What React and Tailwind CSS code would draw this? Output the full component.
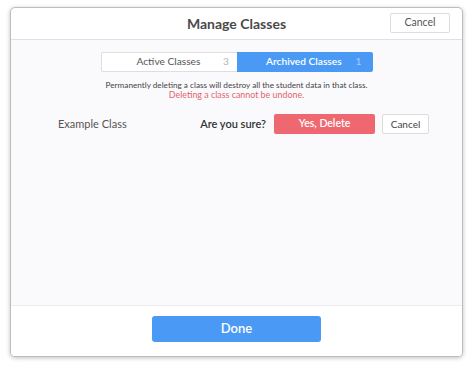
export default function App() {
  const font = { fontFamily: "Lato, 'Open Sans', sans-serif" };
  return (
    <div className="w-[474px] h-[370px] bg-white pt-[7px] px-[10px]" style={font}>
      <div className="w-[453px] h-[350px] rounded-[5px] border border-[#bdbdbd] shadow-[0_1px_4px_rgba(0,0,0,0.25)] bg-white flex flex-col overflow-hidden">
        <div className="h-[32px] flex items-center justify-center relative border-b border-[#e0e0e3] shrink-0">
          <div className="text-[14px] font-bold text-[#4a4a4a]">Manage Classes</div>
          <button className="absolute right-[12px] top-[5px] w-[60px] h-[20px] border border-[#dcdcdc] rounded-[2px] bg-white text-[10.5px] text-[#555] flex items-center justify-center">Cancel</button>
        </div>
        <div className="flex-1 bg-[#fafafc] flex flex-col items-center pt-[12px]">
          <div className="flex w-[272px] h-[20px] text-[10.2px]">
            <div className="flex-1 border border-[#dedede] border-r-0 bg-white rounded-l-[2px] flex items-center relative">
              <span className="absolute left-[35px] text-[#555]">Active Classes</span>
              <span className="absolute right-[8px] text-[#b5b5b5]">3</span>
            </div>
            <div className="flex-1 bg-[#4a9af5] rounded-r-[2px] flex items-center relative">
              <span className="absolute left-[29px] text-white font-semibold">Archived Classes</span>
              <span className="absolute right-[11px] text-[#a9cdf9]">1</span>
            </div>
          </div>
          <div className="mt-[8px] text-[8.2px] leading-[10px] text-[#444] text-center">Permanently deleting a class will destroy all the student data in that class.</div>
          <div className="text-[8.9px] leading-[10px] text-[#e4646b] text-center">Deleting a class cannot be undone.</div>
          <div className="w-full mt-[14px] flex items-center h-[20px]">
            <div className="ml-[47px] text-[11px] text-[#555]">Example Class</div>
            <div className="ml-auto text-[11px] text-[#333] font-semibold mr-[8px]">Are you sure?</div>
            <button className="w-[101px] h-[20px] rounded-[2px] bg-[#f0686f] text-white text-[10.5px] font-semibold flex items-center justify-center">Yes, Delete</button>
            <button className="ml-[7px] mr-[33px] w-[47px] h-[20px] rounded-[2px] border border-[#dcdcdc] bg-white text-[10px] text-[#444] flex items-center justify-center">Cancel</button>
          </div>
        </div>
        <div className="h-[51px] border-t border-[#ececef] bg-white flex items-start justify-center pt-[10px] shrink-0">
          <button className="w-[169px] h-[26px] rounded-[3px] bg-[#4a9af5] text-white text-[13px] font-semibold flex items-center justify-center">Done</button>
        </div>
      </div>
    </div>
  );
}
